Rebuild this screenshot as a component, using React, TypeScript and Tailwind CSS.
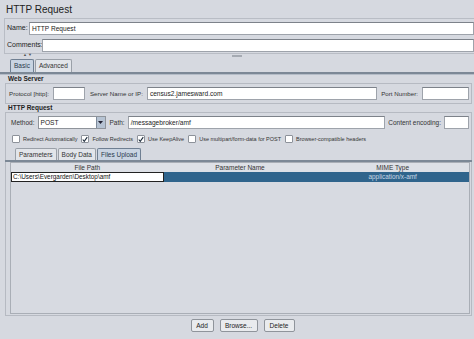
import React from 'react'

const Field: React.FC<{ className?: string; value?: string }> = ({ className = '', value = '' }) => (
 <div className={`h-[13px] bg-white border border-[#9ea3ab] border-t-[#7d828a] flex items-center px-[2px] text-[6.6px] text-[#222] whitespace-nowrap overflow-hidden ${className}`}>
  {value}
 </div>
)

const Check: React.FC<{ checked?: boolean; label: string }> = ({ checked, label }) => (
 <div className="flex items-center gap-[3px]">
  <div className="w-[8px] h-[8px] bg-white border border-[#8d929a] rounded-[1px] flex items-center justify-center">
   {checked && (
    <svg width="7" height="7" viewBox="0 0 8 8">
     <path d="M1 4 L3 6.5 L7 0.8" fill="none" stroke="#1b2a3a" strokeWidth="1.4" />
    </svg>
   )}
  </div>
  <span className="text-[5.5px] text-[#333] whitespace-nowrap">{label}</span>
 </div>
)

const Tab: React.FC<{ active?: boolean; label: string; className?: string }> = ({ active, label, className = '' }) => (
 <div
  className={`h-[12px] px-[3px] flex items-center text-[6.5px] whitespace-nowrap border border-b-0 rounded-t-[2px] ${
   active ? 'bg-[#c9d4e2] border-[#6f7f92] text-[#2a3a4d]' : 'bg-[#e2e5ea] border-[#9aa0a8] text-[#333]'
  } ${className}`}
 >
  {label}
 </div>
)

const Btn: React.FC<{ label: string; className?: string }> = ({ label, className = '' }) => (
 <div className={`h-[13px] flex items-center justify-center text-[6.5px] text-[#222] bg-[#e9ebee] border border-[#8f949b] rounded-[2px] ${className}`}>
  {label}
 </div>
)

export default function App() {
 return (
  <div className="w-[474px] h-[339px] overflow-hidden bg-[#d6d9e0] font-['Liberation_Sans',Arial,sans-serif] text-[#222] flex flex-col">
   <div className="h-[18px] pl-[6px] pt-[5px] text-[10px] leading-none text-[#222]">HTTP Request</div>

   <div className="ml-[4px] border-t border-b border-l border-[#b9bdc5] pt-[3px] pb-[1px] flex flex-col gap-[4px]">
    <div className="flex items-center">
     <span className="w-[24px] shrink-0 pl-[2px] text-[7px] whitespace-nowrap">Name:</span>
     <Field className="flex-1" value="HTTP Request" />
    </div>
    <div className="flex items-center">
     <span className="w-[37px] shrink-0 pl-[2px] text-[7px] whitespace-nowrap">Comments:</span>
     <Field className="flex-1 h-[11px]" />
    </div>
   </div>

   <div className="h-[5px] relative">
    <span className="absolute left-[23px] top-[-2px] text-[4px] text-[#555] tracking-[1px]">▲▼</span>
    <span className="absolute left-[232px] top-[1px] w-[10px] h-[2px] border-t border-b border-[#a5aab2]"></span>
   </div>

   <div className="flex pl-[10px] gap-[1px]">
    <Tab active label="Basic" className="h-[13px] px-[2px]" />
    <Tab label="Advanced" className="h-[13px] px-[2px]" />
   </div>
   <div className="h-[3px] border-t-2 border-[#7c8896] bg-[#b4bcc7]"></div>

   <div className="pl-[5px] pr-[2px] flex flex-col flex-1">
    <div className="pl-[3px] text-[6.5px] font-bold leading-[8px]">Web Server</div>
    <div className="border border-[#b6bac2] h-[21px] flex items-center pl-[3px] pr-[2px] gap-[4px]">
     <span className="text-[6.2px] text-[#333] whitespace-nowrap">Protocol [http]:</span>
     <Field className="w-[32px]" />
     <span className="text-[6.2px] text-[#333] ml-[1px] whitespace-nowrap">Server Name or IP:</span>
     <Field className="flex-1" value="census2.jamesward.com" />
     <span className="text-[6.2px] text-[#333] whitespace-nowrap">Port Number:</span>
     <Field className="w-[47px]" />
    </div>

    <div className="pl-[3px] text-[6.5px] font-bold leading-[8px]">HTTP Request</div>
    <div className="border border-[#b6bac2] flex-1 flex flex-col pb-[1px]">
     <div className="flex items-center gap-[3px] pl-[5px] pr-[2px] mt-[3px]">
      <span className="text-[6.5px] text-[#333]">Method:</span>
      <div className="w-[68px] h-[13px] bg-white border border-[#8f949b] flex items-center justify-between pl-[2px]">
       <span className="text-[6.6px]">POST</span>
       <div className="w-[9px] h-[11px] bg-[#b6c3d3] border-l border-[#7d8a9a] flex items-center justify-center">
        <svg width="5" height="3" viewBox="0 0 5 3"><path d="M0 0 L5 0 L2.5 3 Z" fill="#223" /></svg>
       </div>
      </div>
      <span className="text-[6.5px] text-[#333] ml-[1px]">Path:</span>
      <Field className="flex-1" value="/messagebroker/amf" />
      <span className="text-[6.5px] text-[#333] whitespace-nowrap">Content encoding:</span>
      <Field className="w-[25px]" />
     </div>

     <div className="flex items-center gap-[4px] pl-[6px] mt-[6px]">
      <Check label="Redirect Automatically" />
      <Check checked label="Follow Redirects" />
      <Check checked label="Use KeepAlive" />
      <Check label="Use multipart/form-data for POST" />
      <Check label="Browser-compatible headers" />
     </div>

     <div className="flex pl-[9px] gap-[1px] mt-[5px]">
      <Tab label="Parameters" />
      <Tab label="Body Data" />
      <Tab active label="Files Upload" />
     </div>
     <div className="h-[2px] bg-[#7c8896] mx-[-1px]"></div>

     <div className="ml-[4px] mr-[1px] flex-1 border border-[#a9aeb6] bg-[#d7dae1] flex flex-col">
      <div className="grid grid-cols-3 h-[9px] text-[6.5px] leading-[9px] text-[#333] text-center bg-[#dde0e6]">
       <span>File Path</span>
       <span>Parameter Name</span>
       <span>MIME Type</span>
      </div>
      <div className="grid grid-cols-3 h-[10px] text-[6.4px] leading-[8px]">
       <div className="bg-white border border-[#222] pl-[1px] text-[#111] whitespace-nowrap overflow-hidden">C:\Users\Evergarden\Desktop\amf</div>
       <div className="bg-[#2f648c]"></div>
       <div className="bg-[#2f648c] text-[#c9d8e6] text-center leading-[10px]">application/x-amf</div>
      </div>
     </div>
    </div>

    <div className="h-[23px] flex items-start pt-[3px] justify-center gap-[6px] pl-[8px]">
     <Btn label="Add" className="w-[23px]" />
     <Btn label="Browse..." className="w-[38px]" />
     <Btn label="Delete" className="w-[31px]" />
    </div>
   </div>
  </div>
 )
}
